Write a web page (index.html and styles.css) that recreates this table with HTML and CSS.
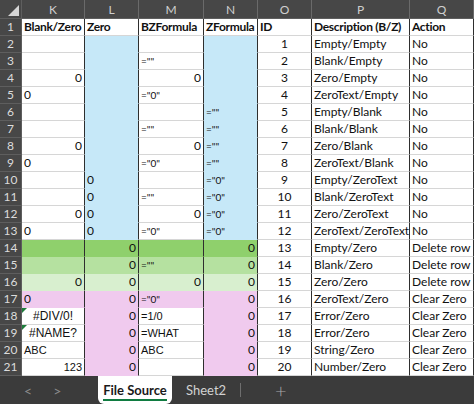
FILE: index.html
```html
<!DOCTYPE html>
<html>
<head>
<meta charset="utf-8">
<link rel="stylesheet" href="styles.css">
</head>
<body>
<div class="sheet">
  <div class="corner"><span class="tri"></span></div>
  <div class="colh">K</div><div class="colh">L</div><div class="colh">M</div><div class="colh">N</div><div class="colh">O</div><div class="colh">P</div><div class="colh">Q</div>

  <div class="rowh">1</div>
  <div class="c b">Blank/Zero</div><div class="c b">Zero</div><div class="c b">BZFormula</div><div class="c b">ZFormula</div><div class="c b">ID</div><div class="c b">Description (B/Z)</div><div class="c b">Action</div>

  <div class="rowh">2</div>
  <div class="c"></div><div class="c blue"></div><div class="c"></div><div class="c blue"></div><div class="c n">1</div><div class="c">Empty/Empty</div><div class="c">No</div>

  <div class="rowh">3</div>
  <div class="c"></div><div class="c blue"></div><div class="c f">=""</div><div class="c blue"></div><div class="c n">2</div><div class="c">Blank/Empty</div><div class="c">No</div>

  <div class="rowh">4</div>
  <div class="c r">0</div><div class="c blue"></div><div class="c r">0</div><div class="c blue"></div><div class="c n">3</div><div class="c">Zero/Empty</div><div class="c">No</div>

  <div class="rowh">5</div>
  <div class="c">0</div><div class="c blue"></div><div class="c f">="0"</div><div class="c blue"></div><div class="c n">4</div><div class="c">ZeroText/Empty</div><div class="c">No</div>

  <div class="rowh">6</div>
  <div class="c"></div><div class="c blue"></div><div class="c"></div><div class="c blue f">=""</div><div class="c n">5</div><div class="c">Empty/Blank</div><div class="c">No</div>

  <div class="rowh">7</div>
  <div class="c"></div><div class="c blue"></div><div class="c f">=""</div><div class="c blue f">=""</div><div class="c n">6</div><div class="c">Blank/Blank</div><div class="c">No</div>

  <div class="rowh">8</div>
  <div class="c r">0</div><div class="c blue"></div><div class="c r">0</div><div class="c blue f">=""</div><div class="c n">7</div><div class="c">Zero/Blank</div><div class="c">No</div>

  <div class="rowh">9</div>
  <div class="c">0</div><div class="c blue"></div><div class="c f">="0"</div><div class="c blue f">=""</div><div class="c n">8</div><div class="c">ZeroText/Blank</div><div class="c">No</div>

  <div class="rowh">10</div>
  <div class="c"></div><div class="c blue">0</div><div class="c"></div><div class="c blue f">="0"</div><div class="c n">9</div><div class="c">Empty/ZeroText</div><div class="c">No</div>

  <div class="rowh">11</div>
  <div class="c"></div><div class="c blue">0</div><div class="c f">=""</div><div class="c blue f">="0"</div><div class="c n">10</div><div class="c">Blank/ZeroText</div><div class="c">No</div>

  <div class="rowh">12</div>
  <div class="c r">0</div><div class="c blue">0</div><div class="c r">0</div><div class="c blue f">="0"</div><div class="c n">11</div><div class="c">Zero/ZeroText</div><div class="c">No</div>

  <div class="rowh">13</div>
  <div class="c">0</div><div class="c blue">0</div><div class="c f">="0"</div><div class="c blue f">="0"</div><div class="c n">12</div><div class="c">ZeroText/ZeroText</div><div class="c">No</div>

  <div class="rowh">14</div>
  <div class="c g1"></div><div class="c g1 r">0</div><div class="c g1"></div><div class="c g1 r">0</div><div class="c n">13</div><div class="c">Empty/Zero</div><div class="c">Delete row</div>

  <div class="rowh">15</div>
  <div class="c g2"></div><div class="c g2 r">0</div><div class="c g2 f">=""</div><div class="c g2 r">0</div><div class="c n">14</div><div class="c">Blank/Zero</div><div class="c">Delete row</div>

  <div class="rowh">16</div>
  <div class="c g3 r">0</div><div class="c g3 r">0</div><div class="c g3 r">0</div><div class="c g3 r">0</div><div class="c n">15</div><div class="c">Zero/Zero</div><div class="c">Delete row</div>

  <div class="rowh">17</div>
  <div class="c pink">0</div><div class="c pink r">0</div><div class="c pink f">="0"</div><div class="c pink r">0</div><div class="c n">16</div><div class="c">ZeroText/Zero</div><div class="c">Clear Zero</div>

  <div class="rowh">18</div>
  <div class="c ctr err"><span class="flag"></span>#DIV/0!</div><div class="c pink r">0</div><div class="c a">=1/0</div><div class="c pink r">0</div><div class="c n">17</div><div class="c">Error/Zero</div><div class="c">Clear Zero</div>

  <div class="rowh">19</div>
  <div class="c ctr err"><span class="flag"></span>#NAME?</div><div class="c pink r">0</div><div class="c a">=WHAT</div><div class="c pink r">0</div><div class="c n">18</div><div class="c">Error/Zero</div><div class="c">Clear Zero</div>

  <div class="rowh">20</div>
  <div class="c a">ABC</div><div class="c pink r">0</div><div class="c a">ABC</div><div class="c pink r">0</div><div class="c n">19</div><div class="c">String/Zero</div><div class="c">Clear Zero</div>

  <div class="rowh">21</div>
  <div class="c a r">123</div><div class="c pink r">0</div><div class="c"></div><div class="c pink r">0</div><div class="c n">20</div><div class="c">Number/Zero</div><div class="c">Clear Zero</div>
</div>
<div class="tabs">
  <div class="nav"><span class="arrow">&lt;</span><span class="arrow">&gt;</span></div>
  <div class="tab active"><span class="label">File Source</span></div>
  <div class="tab">Sheet2</div>
  <div class="sep"></div>
  <div class="plus">+</div>
</div>
</body>
</html>
```
FILE: styles.css
```css
html, body {
  margin: 0;
  padding: 0;
  background: #3b3b3b;
}
body {
  width: 474px;
  height: 404px;
  overflow: hidden;
  font-family: Lato, "Open Sans", sans-serif;
}
.sheet {
  display: grid;
  grid-template-columns: 22px 63px 54px 65px 54px 54px 98px 64px;
  grid-template-rows: 19px repeat(21, 17px);
  background: #ffffff;
}
.corner {
  background: #474747;
  border-right: 1px solid #5e5e5e;
  border-bottom: 1px solid #5e5e5e;
  position: relative;
}
.tri {
  position: absolute;
  right: 2px;
  bottom: 2px;
  width: 0;
  height: 0;
  border-left: 11px solid transparent;
  border-bottom: 11px solid #d6d6d6;
}
.colh {
  background: #474747;
  color: #cfcfcf;
  font-size: 12px;
  text-align: center;
  line-height: 19px;
  border-right: 1px solid #6a6a6a;
  border-bottom: 1px solid #5e5e5e;
}
.rowh {
  background: #474747;
  color: #dcdcdc;
  font-size: 12px;
  text-align: center;
  line-height: 16px;
  border-right: 1px solid #5e5e5e;
  border-bottom: 1px solid #5e5e5e;
}
.c {
  box-sizing: border-box;
  border-right: 1px solid #2e2e2e;
  border-bottom: 1px solid #d6d6d6;
  padding: 0 2px;
  font-size: 12px;
  line-height: 16px;
  color: #111111;
  white-space: nowrap;
  overflow: hidden;
  position: relative;
}
.b { font-weight: 700; letter-spacing: -0.3px; }
.r { text-align: right; }
.n { text-align: center; }
.ctr { text-align: center; }
.f { font-size: 10px; }
.a { font-family: "Liberation Sans", Arial, sans-serif; font-size: 11px; }
.err { font-family: "Liberation Sans", Arial, sans-serif; font-size: 12px; }
.blue { background: #c6e8f8; border-bottom-color: #c6e8f8; }
.g1 { background: #8fd06c; border-bottom-color: #8fd06c; }
.g2 { background: #b5e1a0; border-bottom-color: #b5e1a0; }
.g3 { background: #d8efcf; border-bottom-color: #d8efcf; }
.pink { background: #f0caee; border-bottom-color: #f0caee; }
.flag {
  position: absolute;
  left: 0;
  top: 0;
  width: 0;
  height: 0;
  border-top: 5px solid #1e7d3c;
  border-right: 5px solid transparent;
}
.tabs {
  height: 28px;
  display: flex;
  align-items: stretch;
  background: #3b3b3b;
  font-size: 13px;
}
.nav {
  width: 98px;
  display: flex;
  align-items: center;
  gap: 21px;
  padding-left: 24px;
  box-sizing: border-box;
  color: #8c8c8c;
  font-size: 14px;
}
.tab {
  display: flex;
  align-items: center;
  padding: 0 14px;
  color: #d2d2d2;
}
.tab.active {
  background: #ffffff;
  color: #1a1a1a;
  font-weight: 700;
  border-radius: 0 0 6px 6px;
  width: 74px;
  box-sizing: border-box;
  justify-content: center;
  padding: 0;
}
.label {
  border-bottom: 2px solid #107c41;
  padding-bottom: 1px;
  margin-top: 3px;
}
.sep {
  width: 1px;
  background: #6e6e6e;
  margin: 7px 0;
}
.plus {
  display: flex;
  align-items: center;
  margin-left: 34px;
  color: #a8a8a8;
  font-size: 20px;
  font-weight: 300;
}
```
